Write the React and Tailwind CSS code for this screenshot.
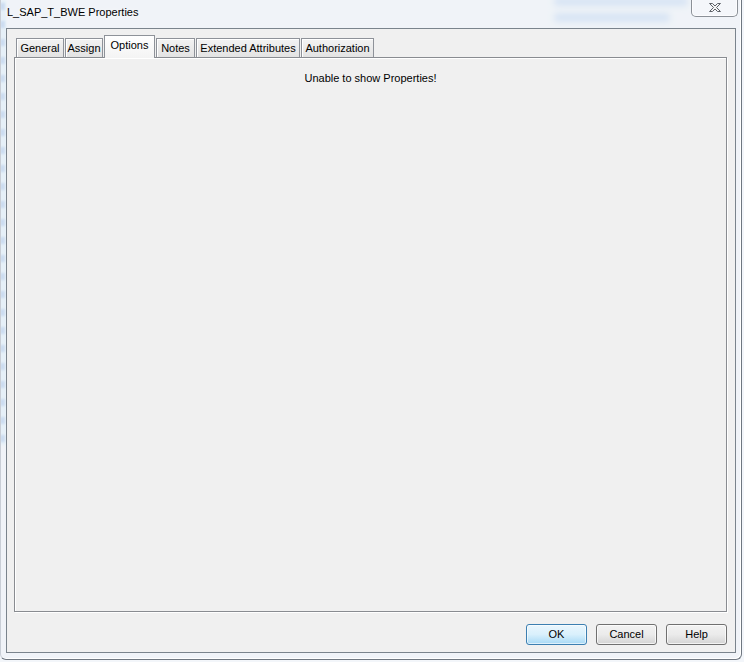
import React from "react";

const tabs = [
  { label: "General", w: 48 },
  { label: "Assign", w: 38 },
  { label: "Options", w: 51, selected: true },
  { label: "Notes", w: 39 },
  { label: "Extended Attributes", w: 104 },
  { label: "Authorization", w: 73 },
];

function CloseGlyph() {
  return (
    <svg width="14" height="11" viewBox="0 0 14 11">
      <path
        d="M1.5 1.5 H4.5 L7 4 L9.5 1.5 H12.5 L8.5 5.5 L12.5 9.5 H9.5 L7 7 L4.5 9.5 H1.5 L5.5 5.5 Z"
        fill="#f4f4f4"
        stroke="#5d6168"
        strokeWidth="1"
        strokeLinejoin="round"
      />
    </svg>
  );
}

export default function App() {
  const dashes = Array.from({ length: 25 }, (_, i) => 3 + i * 18);
  return (
    <div className="relative w-[744px] h-[662px] overflow-hidden bg-[#f3f6fa] font-['Liberation_Sans','DejaVu_Sans',sans-serif] text-black">
      {/* desktop content showing through the glass */}
      <div className="absolute left-0 top-0 w-[6px] h-[445px] bg-[#d2ebfb] blur-[1px]" />
      {dashes.map((y) => (
        <div
          key={y}
          className="absolute left-0 w-[5px] h-[7px] bg-[#7ea9e2] blur-[1px]"
          style={{ top: y }}
        />
      ))}
      <div className="absolute left-[554px] top-[-3px] w-[134px] h-[9px] rounded bg-[#a3c4ef] blur-[3px]" />
      <div className="absolute left-[554px] top-[13px] w-[116px] h-[9px] rounded bg-[#a3c4ef] blur-[3px]" />

      {/* window frame */}
      <div className="relative flex flex-col w-[742px] h-[660px] border-r border-b border-l border-l-[#c9ced6] border-[#6f7780] rounded-bl-[6px] rounded-br-[6px] bg-[#eef2f7]/70 shadow-[inset_-1px_-1px_0_#ffffff]">
        <div className="h-[28px] pl-[6px] pt-[5px] text-[11px] leading-[15px] [text-shadow:0_0_6px_#ffffff]">
          L_SAP_T_BWE Properties
        </div>
        <div className="absolute right-[3px] top-[-1px] w-[47px] h-[18px] flex items-center justify-center border border-t-0 border-[#8b9097] rounded-b-[5px] bg-white/30 shadow-[inset_0_0_0_1px_rgba(255,255,255,0.7)]">
          <CloseGlyph />
        </div>

        {/* client area */}
        <div className="ml-[5px] mr-[5px] mb-[6px] flex-1 flex flex-col border border-[#7a838c] bg-[#f0f0f0] pl-[7px] pr-[8px] pt-[6px] pb-[7px] text-[11px]">
          <div className="flex items-end h-[22px] pl-[2px] gap-[1px] relative z-10">
            {tabs.map((t) =>
              t.selected ? (
                <div
                  key={t.label}
                  className="h-[23px] -mb-[1px] flex justify-center pt-[3px] border border-b-0 border-[#8e9299] bg-gradient-to-b from-white to-[#f4f4f4] leading-[13px]"
                  style={{ width: t.w }}
                >
                  {t.label}
                </div>
              ) : (
                <div
                  key={t.label}
                  className="h-[19px] flex justify-center pt-[3px] border border-b-0 border-[#8e9299] bg-gradient-to-b from-[#f3f3f3] to-[#e3e3e3] shadow-[inset_1px_1px_0_#ffffff] leading-[13px]"
                  style={{ width: t.w }}
                >
                  {t.label}
                </div>
              )
            )}
          </div>
          <div className="flex-1 border border-[#898c91] bg-[#f0f0f0] shadow-[inset_1px_1px_0_#ffffff,1px_1px_0_#ffffff] pt-[14px] text-center leading-[13px]">
            Unable to show Properties!
          </div>
          <div className="mt-[12px] flex justify-end gap-[9px]">
            <div className="w-[61px] h-[21px] flex items-center justify-center rounded-[3px] border border-[#3c7fb1] bg-gradient-to-b from-[#eaf6fd] via-[#d9f0fc] to-[#a7d9f5] shadow-[inset_0_0_0_1px_rgba(255,255,255,0.6)]">
              OK
            </div>
            <div className="w-[61px] h-[21px] flex items-center justify-center rounded-[3px] border border-[#707070] bg-gradient-to-b from-[#f2f2f2] via-[#ebebeb] to-[#d4d4d4] shadow-[inset_0_0_0_1px_rgba(255,255,255,0.7)]">
              Cancel
            </div>
            <div className="w-[61px] h-[21px] flex items-center justify-center rounded-[3px] border border-[#707070] bg-gradient-to-b from-[#f2f2f2] via-[#ebebeb] to-[#d4d4d4] shadow-[inset_0_0_0_1px_rgba(255,255,255,0.7)]">
              Help
            </div>
          </div>
        </div>
      </div>
    </div>
  );
}
